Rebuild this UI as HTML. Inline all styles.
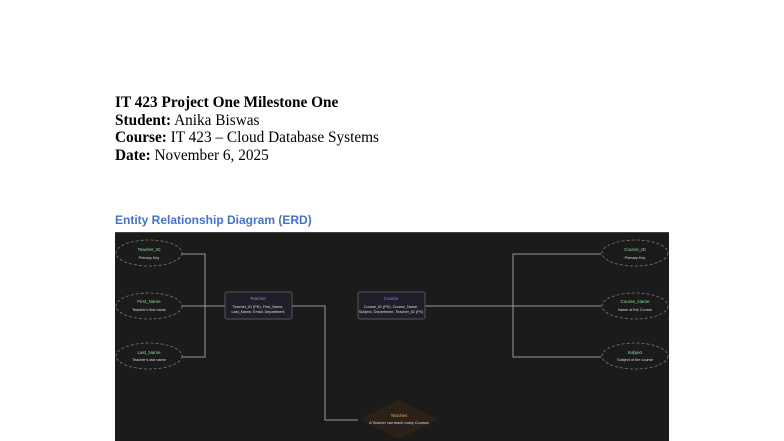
<!DOCTYPE html>
<html><head><meta charset="utf-8"><style>
html,body{margin:0;padding:0;background:#fff;width:784px;height:441px;overflow:hidden}
.t{position:absolute;left:115px;font-family:"Liberation Serif",serif;font-size:15.3px;color:#000;line-height:17.7px;white-space:nowrap}
b{font-weight:bold}
.h{position:absolute;left:115px;top:213px;font-family:"Liberation Sans",sans-serif;font-size:12px;font-weight:bold;color:#4472c4}
svg{position:absolute;left:115px;top:232px}
</style></head><body>
<div class="t" style="top:94px"><b>IT 423 Project One Milestone One</b><br><b>Student:</b> Anika Biswas<br><b>Course:</b> IT 423 – Cloud Database Systems<br><b>Date:</b> November 6, 2025</div>
<div class="h">Entity Relationship Diagram (ERD)</div>
<svg width="554" height="209" viewBox="115 232 554 209" font-family="Liberation Sans,sans-serif">
<rect x="115" y="232" width="554" height="209" fill="#1b1b1b"/>
<line x1="115" y1="232.5" x2="669" y2="232.5" stroke="#444" stroke-width="1"/>
<g stroke="#9a9a9a" stroke-width="1" fill="none">
<polyline points="182,254 205,254 205,357 182,357"/>
<line x1="182" y1="306" x2="225" y2="306"/>
<polyline points="292,306 325,306 325,420 358,420"/>
<line x1="425" y1="306" x2="601" y2="306"/>
<polyline points="601,254 513,254 513,357 601,357"/>
</g>
<g stroke="#777" stroke-dasharray="3,2" fill="#1b1b1b" stroke-width="0.8">
<ellipse cx="149" cy="253" rx="33" ry="13"/>
<ellipse cx="149" cy="306" rx="33" ry="13"/>
<ellipse cx="149" cy="356" rx="33" ry="13"/>
<ellipse cx="635" cy="253" rx="33" ry="13"/>
<ellipse cx="635" cy="306" rx="33" ry="13"/>
<ellipse cx="635" cy="356" rx="33" ry="13"/>
</g>
<rect x="225" y="292" width="67" height="27" rx="2" fill="#1f1f2a" stroke="#555"/>
<rect x="358" y="292" width="67" height="27" rx="2" fill="#1f1f2a" stroke="#555"/>
<polygon points="399,400 438,419 399,439 360,419" fill="#2a2119"/>
<g font-size="4.5" text-anchor="middle">
<g fill="#8fdc9a">
<text x="149" y="251">Teacher_ID</text><text x="149" y="303">First_Name</text><text x="149" y="354">Last_Name</text>
<text x="635" y="251">Course_ID</text><text x="635" y="303">Course_Name</text><text x="635" y="354">Subject</text></g>
<g fill="#ddd" font-size="3.8">
<text x="149" y="259">Primary Key</text><text x="149" y="311">Teacher's first name</text><text x="149" y="361">Teacher's last name</text>
<text x="635" y="259">Primary Key</text><text x="635" y="311">Name of the Course</text><text x="635" y="361">Subject of the course</text>
<text x="258" y="308">Teacher_ID (PK), First_Name,</text><text x="258" y="313">Last_Name, Email, Department</text>
<text x="391" y="308">Course_ID (PK), Course_Name,</text><text x="391" y="313">Subject, Department, Teacher_ID (FK)</text>
<text x="399" y="424">A Teacher can teach many Courses</text></g>
<text x="258" y="300" fill="#8b7fff">Teacher</text>
<text x="391" y="300" fill="#8b7fff">Course</text>
<text x="399" y="417" fill="#f0a050">Teaches</text>
</g>
</svg>
</body></html>
